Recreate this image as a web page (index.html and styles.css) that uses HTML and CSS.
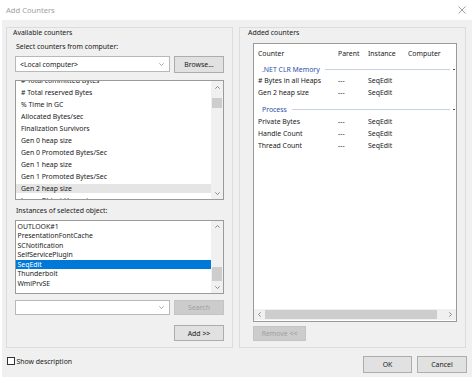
FILE: index.html
```html
<!DOCTYPE html>
<html lang="en">
<head>
    <meta charset="UTF-8">
    <title>Add Counters</title>
    <link rel="stylesheet" href="styles.css">
</head>
<body>
    <div class="window">
        <div class="titlebar">
            <span class="title">Add Counters</span>
            <svg class="close" width="8" height="8" viewBox="0 0 8 8"><path d="M0.5 0.5 L7.5 7.5 M7.5 0.5 L0.5 7.5" stroke="#8a8a8a" stroke-width="0.8" fill="none"/></svg>
        </div>

        <div class="dialog">
            <div class="groups">
                <div class="group group-left">
                    <div class="group-label">Available counters</div>
                    <div class="field-label">Select counters from computer:</div>
                    <div class="combo-row">
                        <div class="combo">
                            <span>&lt;Local computer&gt;</span>
                            <svg class="chev" width="5" height="3" viewBox="0 0 5 3"><polyline points="0.3,0.3 2.5,2.5 4.7,0.3" fill="none" stroke="#8a8a8a" stroke-width="0.7"/></svg>
                        </div>
                        <button class="btn btn-browse">Browse...</button>
                    </div>

                    <div class="listbox list-counters">
                        <div class="items items-counters">
                            <div class="row">#&nbsp;Total committed Bytes</div>
                            <div class="row">#&nbsp;Total reserved Bytes</div>
                            <div class="row">%&nbsp;Time in GC</div>
                            <div class="row">Allocated Bytes/sec</div>
                            <div class="row">Finalization Survivors</div>
                            <div class="row">Gen 0 heap size</div>
                            <div class="row">Gen 0 Promoted Bytes/Sec</div>
                            <div class="row">Gen 1 heap size</div>
                            <div class="row">Gen 1 Promoted Bytes/Sec</div>
                            <div class="row hover">Gen 2 heap size</div>
                            <div class="row">Large Object Heap size</div>
                        </div>
                        <div class="vscroll vscroll-1">
                            <div class="sb-btn"><svg width="5" height="3" viewBox="0 0 5 3"><polyline points="0.3,2.7 2.5,0.5 4.7,2.7" fill="none" stroke="#606060" stroke-width="0.7"/></svg></div>
                            <div class="sb-track"><div class="sb-thumb"></div></div>
                            <div class="sb-btn"><svg width="5" height="3" viewBox="0 0 5 3"><polyline points="0.3,0.3 2.5,2.5 4.7,0.3" fill="none" stroke="#606060" stroke-width="0.7"/></svg></div>
                        </div>
                    </div>

                    <div class="field-label instances-label">Instances of selected object:</div>
                    <div class="listbox list-instances">
                        <div class="items items-instances">
                            <div class="irow">OUTLOOK#1</div>
                            <div class="irow">PresentationFontCache</div>
                            <div class="irow">SCNotification</div>
                            <div class="irow">SelfServicePlugin</div>
                            <div class="irow selected">SeqEdit</div>
                            <div class="irow">Thunderbolt</div>
                            <div class="irow">WmiPrvSE</div>
                        </div>
                        <div class="vscroll vscroll-2">
                            <div class="sb-btn"><svg width="5" height="3" viewBox="0 0 5 3"><polyline points="0.3,2.7 2.5,0.5 4.7,2.7" fill="none" stroke="#606060" stroke-width="0.7"/></svg></div>
                            <div class="sb-track"><div class="sb-thumb"></div></div>
                            <div class="sb-btn"><svg width="5" height="3" viewBox="0 0 5 3"><polyline points="0.3,0.3 2.5,2.5 4.7,0.3" fill="none" stroke="#606060" stroke-width="0.7"/></svg></div>
                        </div>
                    </div>

                    <div class="combo-row search-row">
                        <div class="combo">
                            <span></span>
                            <svg class="chev" width="5" height="3" viewBox="0 0 5 3"><polyline points="0.3,0.3 2.5,2.5 4.7,0.3" fill="none" stroke="#8a8a8a" stroke-width="0.7"/></svg>
                        </div>
                        <button class="btn btn-disabled btn-search">Search</button>
                    </div>

                    <div class="add-row">
                        <button class="btn btn-add">Add &gt;&gt;</button>
                    </div>
                </div>

                <div class="group group-right">
                    <div class="group-label">Added counters</div>
                    <div class="listview">
                        <div class="lv-body">
                            <div class="lv-grid lv-header">
                                <span>Counter</span>
                                <span>Parent</span>
                                <span>Instance</span>
                                <span>Computer</span>
                            </div>
                            <div class="lv-group">
                                <span>.NET CLR Memory</span>
                                <div class="lv-line"></div>
                                <div class="lv-mark"></div>
                            </div>
                            <div class="lv-grid lv-row"><span># Bytes in all Heaps</span><span>---</span><span>SeqEdit</span><span></span></div>
                            <div class="lv-grid lv-row"><span>Gen 2 heap size</span><span>---</span><span>SeqEdit</span><span></span></div>
                            <div class="lv-group lv-group-next">
                                <span>Process</span>
                                <div class="lv-line"></div>
                                <div class="lv-mark"></div>
                            </div>
                            <div class="lv-grid lv-row"><span>Private Bytes</span><span>---</span><span>SeqEdit</span><span></span></div>
                            <div class="lv-grid lv-row"><span>Handle Count</span><span>---</span><span>SeqEdit</span><span></span></div>
                            <div class="lv-grid lv-row"><span>Thread Count</span><span>---</span><span>SeqEdit</span><span></span></div>
                        </div>
                        <div class="hscroll">
                            <div class="hs-btn"><svg width="3" height="5" viewBox="0 0 3 5"><polyline points="2.7,0.3 0.5,2.5 2.7,4.7" fill="none" stroke="#606060" stroke-width="0.7"/></svg></div>
                            <div class="hs-track"><div class="hs-thumb"></div></div>
                            <div class="hs-btn"><svg width="3" height="5" viewBox="0 0 3 5"><polyline points="0.3,0.3 2.5,2.5 0.3,4.7" fill="none" stroke="#606060" stroke-width="0.7"/></svg></div>
                        </div>
                    </div>
                    <button class="btn btn-disabled btn-remove">Remove &lt;&lt;</button>
                </div>
            </div>

            <div class="footer">
                <label class="check">
                    <span class="check-box"></span>
                    <span>Show description</span>
                </label>
                <div class="footer-buttons">
                    <button class="btn btn-ok">OK</button>
                    <button class="btn btn-cancel">Cancel</button>
                </div>
            </div>
        </div>
    </div>
</body>
</html>
```

FILE: styles.css
```css
:root {
    --face: #f0f0f0;
    --text: #1a1a1a;
    --group-border: #dcdcdc;
    --list-border: #9a9a9a;
    --btn-face: #e1e1e1;
    --btn-border: #adadad;
    --select-blue: #0078d7;
    --group-blue: #2d50a8;
}

* {
    margin: 0;
    padding: 0;
    box-sizing: border-box;
    font-family: "Noto Sans", "Open Sans", sans-serif;
}

body {
    background: #fff;
    color: var(--text);
    font-size: 6.9px;
}

.window {
    width: 474px;
    height: 381px;
    background: #fff;
    overflow: hidden;
}

.titlebar {
    height: 20px;
    display: flex;
    align-items: center;
    justify-content: space-between;
    padding: 0 8px 0 6px;
}

.title {
    font-size: 7.6px;
    color: #a0a0a0;
}

.dialog {
    margin: 0 2px;
    height: 357px;
    background: var(--face);
    padding: 7px 5px 0 4px;
}

.groups {
    display: flex;
    gap: 6px;
}

.group {
    width: 227px;
    height: 321px;
    border: 1px solid var(--group-border);
    display: flex;
    flex-direction: column;
}

.group-left {
    padding: 0 8px;
}

.group-label {
    height: 10px;
    line-height: 10px;
    margin-left: -2px;
}

.group-right .group-label {
    margin-left: 8px;
}

.field-label {
    height: 10px;
    line-height: 10px;
    margin-top: 4px;
    margin-left: 1px;
}

.instances-label {
    margin-top: 6px;
}

.combo-row {
    display: flex;
    justify-content: space-between;
    align-items: flex-start;
    margin-top: 4px;
}

.combo {
    width: 155px;
    height: 16px;
    background: #fff;
    border: 1px solid #b8b8b8;
    display: flex;
    align-items: center;
    justify-content: space-between;
    padding: 0 5px 0 4px;
}

.chev {
    display: block;
}

.btn {
    background: var(--btn-face);
    border: 1px solid var(--btn-border);
    color: var(--text);
    font-size: 6.9px;
    display: flex;
    align-items: center;
    justify-content: center;
}

.btn-browse {
    width: 50px;
    height: 17px;
}

.btn-disabled {
    background: #cccccc;
    border-color: #c4c4c4;
    color: #a0a0a0;
}

.listbox {
    background: #fff;
    border: 1px solid var(--list-border);
    display: flex;
    overflow: hidden;
}

.list-counters {
    height: 120px;
    margin-top: 7px;
}

.list-instances {
    height: 74px;
    margin-top: 4px;
}

.items {
    flex: 1;
    overflow: hidden;
}

.items-counters {
    padding-top: 0;
}

.items-counters .row:first-child {
    margin-top: -5.45px;
}

.row {
    height: 9.5px;
    line-height: 9.5px;
    margin-bottom: 2.5px;
    padding-left: 5px;
    white-space: nowrap;
}

.row.hover {
    background: #e5e5e5;
}

.items-instances {
    padding-top: 0.5px;
}

.irow {
    height: 9.6px;
    line-height: 9.6px;
    padding-left: 1.5px;
    white-space: nowrap;
}

.irow.selected {
    background: var(--select-blue);
    color: #fff;
}

.vscroll {
    width: 12px;
    background: var(--face);
    display: flex;
    flex-direction: column;
}

.sb-btn {
    height: 12px;
    display: flex;
    align-items: center;
    justify-content: center;
}

.vscroll-2 .sb-btn:first-child {
    height: 11px;
}

.sb-track {
    flex: 1;
}

.sb-thumb {
    background: #cdcdcd;
    margin: 0 1px;
}

.vscroll-1 .sb-thumb {
    margin-top: 4.7px;
    height: 10.6px;
}

.vscroll-2 .sb-thumb {
    margin-top: 34.7px;
    height: 14px;
}

.search-row {
    margin-top: 6px;
}

.search-row .combo {
    height: 15px;
}

.btn-search {
    width: 50px;
    height: 15px;
}

.add-row {
    display: flex;
    justify-content: flex-end;
    margin-top: 10px;
}

.btn-add {
    width: 50px;
    height: 16px;
}

/* Added counters list view */
.listview {
    width: 204px;
    height: 279px;
    margin: 5px 0 0 13px;
    background: #fff;
    border: 1px solid var(--list-border);
    display: flex;
    flex-direction: column;
}

.lv-body {
    flex: 1;
}

.lv-grid {
    display: grid;
    grid-template-columns: 80px 30px 40px 1fr;
}

.lv-grid span {
    padding-left: 4px;
    white-space: nowrap;
}

.lv-header {
    height: 19px;
    line-height: 19px;
}

.lv-row {
    height: 12px;
    line-height: 12px;
}

.lv-group {
    height: 12px;
    display: flex;
    align-items: center;
    padding-left: 8px;
    color: var(--group-blue);
}

.lv-group-next {
    margin-top: 4.7px;
}

.lv-line {
    flex: 1;
    height: 1px;
    background: #c9d1e6;
    margin: 0 3px 0 5px;
}

.lv-mark {
    width: 2px;
    height: 1px;
    background: #555;
    margin-right: 1px;
}

.hscroll {
    height: 11px;
    margin-bottom: 1px;
    background: var(--face);
    display: flex;
}

.hs-btn {
    width: 11px;
    display: flex;
    align-items: center;
    justify-content: center;
}

.hs-btn:last-child {
    width: 12px;
}

.hs-track {
    flex: 1;
    padding: 1px 0;
}

.hs-thumb {
    width: 172px;
    height: 100%;
    background: #cdcdcd;
}

.btn-remove {
    width: 53px;
    height: 15px;
    margin: 4px 0 0 13px;
}

/* Footer */
.footer {
    margin-top: 8px;
    height: 17px;
    display: flex;
    align-items: flex-start;
    justify-content: space-between;
    padding-left: 1px;
}

.check {
    display: flex;
    align-items: center;
    gap: 1.5px;
    margin-top: 0.5px;
    height: 9px;
}

.check-box {
    width: 8px;
    height: 8px;
    background: #fff;
    border: 1px solid #333;
}

.footer-buttons {
    display: flex;
    gap: 5px;
}

.btn-ok {
    width: 49px;
    height: 17px;
}

.btn-cancel {
    width: 50px;
    height: 17px;
}
```
